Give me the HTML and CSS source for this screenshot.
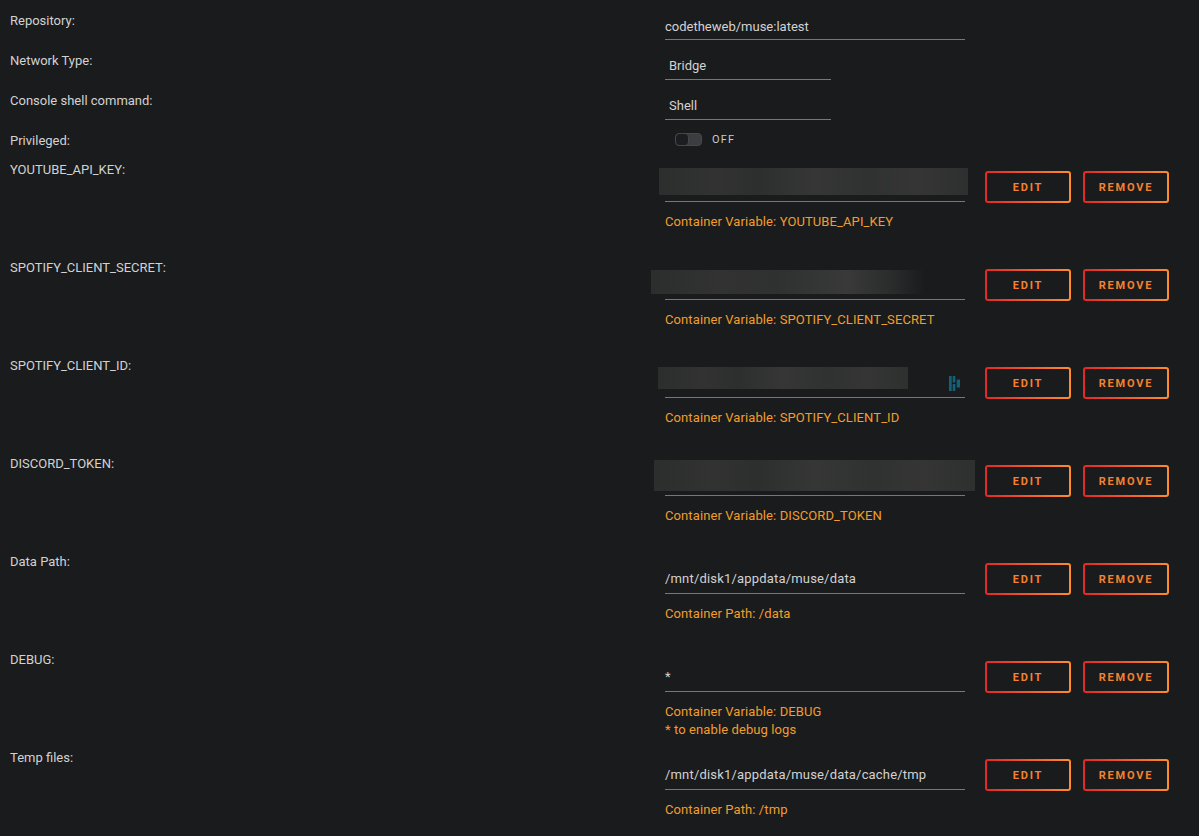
FILE: index.html
```html
<!DOCTYPE html>
<html lang="en">
<head>
<meta charset="utf-8">
<title>Muse container settings</title>
<link rel="stylesheet" href="styles.css">
</head>
<body>
<main class="form">
  <div class="row basic">
    <div class="label">Repository:</div>
    <div class="field wide"><span class="value text">codetheweb/muse:latest</span></div>
  </div>
  <div class="row basic">
    <div class="label">Network Type:</div>
    <div class="field narrow"><span class="value select">Bridge</span></div>
  </div>
  <div class="row basic">
    <div class="label">Console shell command:</div>
    <div class="field narrow"><span class="value select">Shell</span></div>
  </div>
  <div class="row basic">
    <div class="label">Privileged:</div>
    <div class="switch"><span class="toggle"><span class="knob"></span></span><span class="switch-text">OFF</span></div>
  </div>

  <div class="row config">
    <div class="label">YOUTUBE_API_KEY:</div>
    <div class="col">
      <div class="field wide"><span class="value text">&nbsp;</span><span class="blur blur-a"></span></div>
      <div class="hint">Container Variable: YOUTUBE_API_KEY</div>
    </div>
    <div class="actions"><button class="btn">EDIT</button><button class="btn">REMOVE</button></div>
  </div>

  <div class="row config">
    <div class="label">SPOTIFY_CLIENT_SECRET:</div>
    <div class="col">
      <div class="field wide"><span class="value text">&nbsp;</span><span class="blur blur-b"></span></div>
      <div class="hint">Container Variable: SPOTIFY_CLIENT_SECRET</div>
    </div>
    <div class="actions"><button class="btn">EDIT</button><button class="btn">REMOVE</button></div>
  </div>

  <div class="row config">
    <div class="label">SPOTIFY_CLIENT_ID:</div>
    <div class="col">
      <div class="field wide"><span class="value text">&nbsp;</span><span class="blur blur-c"></span>
        <svg class="pm-icon" viewBox="0 0 11 15" width="11" height="15" aria-hidden="true">
          <rect x="0" y="0" width="2.7" height="15" fill="#14617a"/>
          <rect x="3.7" y="0" width="2.6" height="6.5" fill="#14617a"/>
          <rect x="3.7" y="8" width="2.6" height="7" fill="#14617a"/>
          <rect x="7.7" y="3.5" width="3.3" height="8" fill="#14617a"/>
        </svg>
      </div>
      <div class="hint">Container Variable: SPOTIFY_CLIENT_ID</div>
    </div>
    <div class="actions"><button class="btn">EDIT</button><button class="btn">REMOVE</button></div>
  </div>

  <div class="row config">
    <div class="label">DISCORD_TOKEN:</div>
    <div class="col">
      <div class="field wide"><span class="value text">&nbsp;</span><span class="blur blur-d"></span></div>
      <div class="hint">Container Variable: DISCORD_TOKEN</div>
    </div>
    <div class="actions"><button class="btn">EDIT</button><button class="btn">REMOVE</button></div>
  </div>

  <div class="row config">
    <div class="label">Data Path:</div>
    <div class="col">
      <div class="field wide"><span class="value text path">/mnt/disk1/appdata/muse/data</span></div>
      <div class="hint">Container Path: /data</div>
    </div>
    <div class="actions"><button class="btn">EDIT</button><button class="btn">REMOVE</button></div>
  </div>

  <div class="row config">
    <div class="label">DEBUG:</div>
    <div class="col">
      <div class="field wide"><span class="value text">*</span></div>
      <div class="hint">Container Variable: DEBUG<br>* to enable debug logs</div>
    </div>
    <div class="actions"><button class="btn">EDIT</button><button class="btn">REMOVE</button></div>
  </div>

  <div class="row config">
    <div class="label">Temp files:</div>
    <div class="col">
      <div class="field wide"><span class="value text path">/mnt/disk1/appdata/muse/data/cache/tmp</span></div>
      <div class="hint">Container Path: /tmp</div>
    </div>
    <div class="actions"><button class="btn">EDIT</button><button class="btn">REMOVE</button></div>
  </div>
</main>
</body>
</html>
```
FILE: styles.css
```css
html, body {
  margin: 0;
  height: 836px;
  overflow: hidden;
  background: #1a1b1d;
}
body {
  font-family: Roboto, "Noto Sans", sans-serif;
  font-size: 13px;
  color: #d2d2d2;
}
.form { display: flex; flex-direction: column; }
.row { display: flex; align-items: flex-start; }
.row.basic { height: 40px; }
.row.config { height: 98px; }
.label {
  width: 655px;
  padding-left: 10px;
  line-height: 16px;
}
.basic .label { padding-top: 13px; }
.config .label { padding-top: 2px; }
.col { width: 300px; }
.field {
  position: relative;
  box-sizing: border-box;
  border-bottom: 1px solid #7c7672;
}
.wide { width: 300px; }
.narrow { width: 166px; }
.basic .field { height: 40px; padding-top: 18px; }
.config .field { height: 42px; padding-top: 18px; }
.value { display: block; line-height: 16px; }
.text { position: relative; top: 1px; }
.path { letter-spacing: 0.18px; }
.select { padding-left: 4px; }
.hint {
  margin-top: 11px;
  line-height: 18px;
  letter-spacing: 0.1px;
  color: #f29d2a;
}
.switch {
  display: flex;
  align-items: center;
  padding: 13px 0 0 10px;
}
.toggle {
  box-sizing: border-box;
  display: block;
  width: 27px;
  height: 13px;
  border-radius: 4px;
  background: #3b3d40;
  border: 1px solid #45474a;
}
.knob {
  box-sizing: border-box;
  display: block;
  width: 13px;
  height: 11px;
  border-radius: 4px;
  background: #1c1d20;
  border-right: 1px solid #45474a;
}
.switch-text {
  margin-left: 10px;
  font-size: 11px;
  line-height: 11px;
  letter-spacing: 1.2px;
  color: #c8ccd0;
}
.actions {
  display: flex;
  gap: 12px;
  margin-left: 20px;
  padding-top: 11px;
}
.btn {
  box-sizing: border-box;
  width: 86px;
  height: 32px;
  padding: 0;
  border: 2px solid transparent;
  border-radius: 3px;
  background:
    linear-gradient(#1a1b1d, #1a1b1d) padding-box,
    linear-gradient(90deg, #e22828, #ff8c2f) border-box;
  font-family: Roboto, "Noto Sans", sans-serif;
  font-size: 11px;
  font-weight: 700;
  letter-spacing: 1.8px;
  color: #f5812f;
}
.blur {
  position: absolute;
  display: block;
  background: linear-gradient(90deg, #2c2d2d, #313231 18%, #2d2e2e 32%, #353635 50%, #303131 68%, #343534 84%, #2e2f2f);
}
.blur-a { left: -6px; top: 8px; width: 309px; height: 27px; }
.blur-b { left: -14px; top: 12px; width: 274px; height: 24px; background: linear-gradient(90deg, #2c2d2d, #313231 25%, #2f3030 45%, #383938 72%, #2a2b2b 88%, #1a1b1d); }
.blur-c { left: -7px; top: 11px; width: 250px; height: 22px; }
.blur-d { left: -11px; top: 6px; width: 321px; height: 31px; }
.pm-icon { position: absolute; left: 284px; top: 20px; }
```
